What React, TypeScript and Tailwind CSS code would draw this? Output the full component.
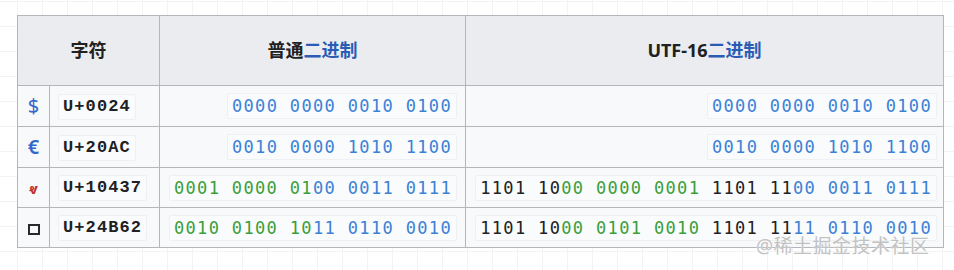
import React from 'react';

type Seg = [string, 'b' | 'g' | 'k'];

interface Row {
    char: React.ReactNode;
    code: string;
    normal: Seg[];
    utf16: Seg[];
}

const colorOf: Record<Seg[1], string> = {
    b: 'text-[#3b82d6]',
    g: 'text-[#3a9f3a]',
    k: 'text-[#202122]',
};

const rows: Row[] = [
    {
        char: <span className="text-[20px] text-[#3366cc]">$</span>,
        code: 'U+0024',
        normal: [['0000 0000 0010 0100', 'b']],
        utf16: [['0000 0000 0010 0100', 'b']],
    },
    {
        char: <span className="text-[20px] font-semibold text-[#3366cc]">€</span>,
        code: 'U+20AC',
        normal: [['0010 0000 1010 1100', 'b']],
        utf16: [['0010 0000 1010 1100', 'b']],
    },
    {
        char: <span className="text-[15px] font-bold text-[#c0312b]">ⱴ</span>,
        code: 'U+10437',
        normal: [['0001 0000 01', 'g'], ['00 0011 0111', 'b']],
        utf16: [['1101 10', 'k'], ['00 0000 0001', 'g'], [' 1101 11', 'k'], ['00 0011 0111', 'b']],
    },
    {
        char: <span className="inline-block h-[11px] w-[12px] border-2 border-[#2a2a2a] align-middle" />,
        code: 'U+24B62',
        normal: [['0010 0100 10', 'g'], ['11 0110 0010', 'b']],
        utf16: [['1101 10', 'k'], ['00 0101 0010', 'g'], [' 1101 11', 'k'], ['11 0110 0010', 'b']],
    },
];

const box = 'inline-block whitespace-pre rounded-[2px] border border-[#eef0f2] bg-[#fafbfc] px-[4px] leading-[24px] text-[#202122]';

// code points: courier-like; bit strings: dejavu mono
const CodePoint: React.FC<{ children: React.ReactNode }> = ({ children }) => (
    <code className={`${box} font-['Liberation_Mono',monospace] text-[17px] font-bold tracking-[1.1px] text-[#2b2b2b]`}>
        {children}
    </code>
);

const Bits: React.FC<{ segs: Seg[] }> = ({ segs }) => (
    <code className={`${box} font-['DejaVu_Sans_Mono','Liberation_Mono',monospace] text-[17px] tracking-[1.35px]`}>
        {segs.map(([t, c], i) => (
            <span key={i} className={colorOf[c]}>{t}</span>
        ))}
    </code>
);

const heights = ['h-[41px]', 'h-[41px]', 'h-[40px]', 'h-[40px]'];

export default function App() {
    return (
        <div className="relative h-[270px] w-[954px] overflow-hidden bg-white bg-[linear-gradient(to_right,#f3f3f3_1px,transparent_1px),linear-gradient(to_bottom,#f3f3f3_1px,transparent_1px)] [background-size:25px_25px] [background-position:17px_1px] pl-[17px] pt-[15px] font-['Noto_Sans','Noto_Sans_CJK_SC',sans-serif]">
            <table className="w-[927px] table-fixed border-collapse border border-[#b3b7bc] bg-[#f8f9fa] text-[#202122]">
                <colgroup>
                    <col className="w-[32px]" />
                    <col className="w-[110px]" />
                    <col className="w-[306px]" />
                    <col className="w-[478px]" />
                </colgroup>
                <thead>
                    <tr className="h-[70px] bg-[#eaecf0] text-[18px] font-bold">
                        <th colSpan={2} className="border border-[#b3b7bc]">字符</th>
                        <th className="border border-[#b3b7bc]">
                            普通<span className="text-[#2a5bb5]">二进制</span>
                        </th>
                        <th className="border border-[#b3b7bc]">
                            UTF-16<span className="text-[#2a5bb5]">二进制</span>
                        </th>
                    </tr>
                </thead>
                <tbody>
                    {rows.map((r, i) => (
                        <tr key={r.code} className={heights[i]}>
                            <td className="border border-[#b3b7bc] text-center leading-none">{r.char}</td>
                            <td className="border border-[#b3b7bc] pl-[8px]">
                                <CodePoint>{r.code}</CodePoint>
                            </td>
                            <td className="border border-[#b3b7bc] pr-[8px] text-right">
                                <Bits segs={r.normal} />
                            </td>
                            <td className="border border-[#b3b7bc] pr-[6px] text-right">
                                <Bits segs={r.utf16} />
                            </td>
                        </tr>
                    ))}
                </tbody>
            </table>
            <div className="absolute left-[756px] top-[236px] text-[19px] leading-[20px] tracking-[0.5px] text-[#c2c2c2] [text-shadow:0_0_1px_#fff]">
                @稀土掘金技术社区
            </div>
        </div>
    );
}
